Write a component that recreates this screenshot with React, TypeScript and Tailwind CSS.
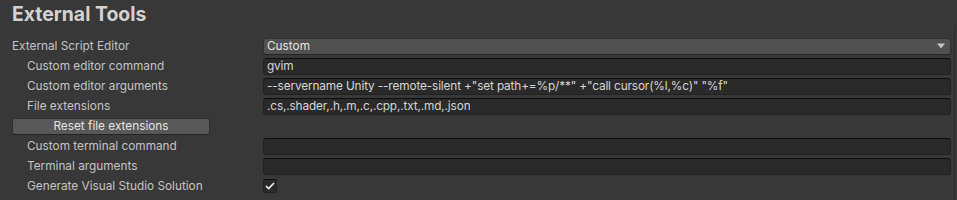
import React from "react";

type Row =
  | { kind: "dropdown"; label: string; value: string }
  | { kind: "text"; label: string; value: string }
  | { kind: "button"; label: string }
  | { kind: "check"; label: string; checked: boolean };

const ROWS: Row[] = [
  { kind: "dropdown", label: "External Script Editor", value: "Custom" },
  { kind: "text", label: "Custom editor command", value: "gvim" },
  {
    kind: "text",
    label: "Custom editor arguments",
    value: '--servername Unity --remote-silent +"set path+=%p/**" +"call cursor(%l,%c)" "%f"',
  },
  { kind: "text", label: "File extensions", value: ".cs,.shader,.h,.m,.c,.cpp,.txt,.md,.json" },
  { kind: "button", label: "Reset file extensions" },
  { kind: "text", label: "Custom terminal command", value: "" },
  { kind: "text", label: "Terminal arguments", value: "" },
  { kind: "check", label: "Generate Visual Studio Solution", checked: true },
];

function TextField({ value }: { value: string }): React.ReactElement {
  return (
    <div className="flex h-[17px] min-w-0 flex-1 items-center overflow-hidden rounded-[3px] border border-[#212121] border-t-[#0d0d0d] bg-[#2a2a2a] px-[3px] text-[11.8px] leading-[15px] tracking-[-0.13px] text-[#d6d6d6]">
      <span className="overflow-hidden whitespace-pre">{value}</span>
    </div>
  );
}

function Dropdown({ value }: { value: string }): React.ReactElement {
  return (
    <div className="flex h-[17px] min-w-0 flex-1 items-center justify-between rounded-[3px] border border-[#303030] border-b-[#242424] bg-[#515151] pl-[3px] pr-[5px] text-[11.8px] leading-[15px] text-[#e4e4e4]">
      <span>{value}</span>
      <svg width="8" height="6" viewBox="0 0 8 6" aria-hidden>
        <path d="M0 0.5 H8 L4 5.5 Z" fill="#c4c4c4" />
      </svg>
    </div>
  );
}

export default function App(): React.ReactElement {
  return (
    <div
      className="relative h-[200px] w-[957px] overflow-hidden bg-[#383838] text-[#c4c4c4]"
      style={{ fontFamily: "Inter, 'Noto Sans', sans-serif" }}
    >
      <div className="absolute bottom-0 right-[2px] top-[25px] w-px bg-[#2c2c2c]" />
      <div className="pl-3 pr-[6px]">
        <h1 className="flex h-[36px] items-center pb-[7px] text-[19.4px] font-bold text-[#d2d2d2]">
          External Tools
        </h1>
        <div className="flex flex-col">
          {ROWS.map((row) => (
            <div key={row.label} className="flex h-[20px] items-center">
              {row.kind === "button" ? (
                <div className="flex h-[17px] w-[198px] items-center justify-center rounded-[3px] border border-[#303030] border-b-[#242424] bg-[#585858] text-[11.8px] leading-[15px] text-[#e4e4e4]">
                  {row.label}
                </div>
              ) : (
                <>
                  <div
                    className={
                      row.kind === "dropdown"
                        ? "w-[251px] shrink-0 text-[11.8px] leading-[15px]"
                        : "w-[251px] shrink-0 pl-[15px] text-[11.8px] leading-[15px]"
                    }
                  >
                    {row.label}
                  </div>
                  {row.kind === "dropdown" ? (
                    <Dropdown value={row.value} />
                  ) : row.kind === "text" ? (
                    <TextField value={row.value} />
                  ) : (
                    <div className="flex h-[14px] w-[14px] items-center justify-center rounded-[2px] border border-[#212121] border-t-[#0d0d0d] bg-[#2a2a2a]">
                      {row.checked ? (
                        <svg width="10" height="8" viewBox="0 0 10 8" aria-hidden>
                          <path d="M1 4.2 L3.7 6.6 L9 1" fill="none" stroke="#e8e8e8" strokeWidth="1.8" />
                        </svg>
                      ) : null}
                    </div>
                  )}
                </>
              )}
            </div>
          ))}
        </div>
      </div>
    </div>
  );
}
